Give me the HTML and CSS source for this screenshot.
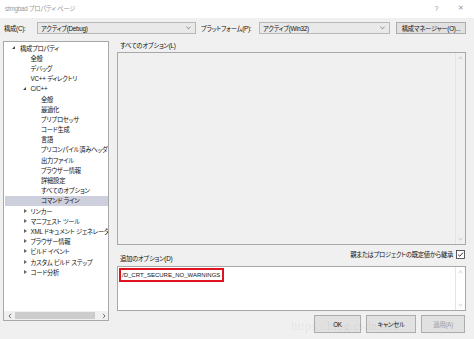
FILE: index.html
```html
<!DOCTYPE html>
<html lang="ja">
<head>
<meta charset="utf-8">
<link rel="stylesheet" href="styles.css">
</head>
<body>
<div class="window">
  <div class="titlebar">
    <span class="title">stmgbad プロパティ ページ</span>
    <span class="tb-btns"><span class="help">?</span><span class="close">✕</span></span>
  </div>
  <div class="toolbar">
    <span class="lbl lbl-config">構成(C):</span>
    <div class="combo combo-config"><span>アクティブ(Debug)</span><svg class="chev" viewBox="0 0 6 4"><path d="M0.5 0.5 L3 3 L5.5 0.5" fill="none" stroke="#555" stroke-width="0.8"/></svg></div>
    <span class="lbl lbl-platform">プラットフォーム(P):</span>
    <div class="combo combo-platform"><span>アクティブ(Win32)</span><svg class="chev" viewBox="0 0 6 4"><path d="M0.5 0.5 L3 3 L5.5 0.5" fill="none" stroke="#555" stroke-width="0.8"/></svg></div>
    <div class="btn btn-manager">構成マネージャー(O)...</div>
  </div>
  <div class="main">
    <div class="tree-panel">
      <div class="tree">
        <div class="row l0"><span class="arrow open"></span><span>構成プロパティ</span></div>
        <div class="row l1"><span class="arrow"></span><span>全般</span></div>
        <div class="row l1"><span class="arrow"></span><span>デバッグ</span></div>
        <div class="row l1"><span class="arrow"></span><span>VC++ ディレクトリ</span></div>
        <div class="row l1"><span class="arrow open"></span><span>C/C++</span></div>
        <div class="row l2"><span class="arrow"></span><span>全般</span></div>
        <div class="row l2"><span class="arrow"></span><span>最適化</span></div>
        <div class="row l2"><span class="arrow"></span><span>プリプロセッサ</span></div>
        <div class="row l2"><span class="arrow"></span><span>コード生成</span></div>
        <div class="row l2"><span class="arrow"></span><span>言語</span></div>
        <div class="row l2"><span class="arrow"></span><span>プリコンパイル済みヘッダー</span></div>
        <div class="row l2"><span class="arrow"></span><span>出力ファイル</span></div>
        <div class="row l2"><span class="arrow"></span><span>ブラウザー情報</span></div>
        <div class="row l2"><span class="arrow"></span><span>詳細設定</span></div>
        <div class="row l2"><span class="arrow"></span><span>すべてのオプション</span></div>
        <div class="row l2 selected"><span class="arrow"></span><span>コマンド ライン</span></div>
        <div class="row l1"><span class="arrow closed"></span><span>リンカー</span></div>
        <div class="row l1"><span class="arrow closed"></span><span>マニフェスト ツール</span></div>
        <div class="row l1"><span class="arrow closed"></span><span>XML ドキュメント ジェネレーター</span></div>
        <div class="row l1"><span class="arrow closed"></span><span>ブラウザー情報</span></div>
        <div class="row l1"><span class="arrow closed"></span><span>ビルド イベント</span></div>
        <div class="row l1"><span class="arrow closed"></span><span>カスタム ビルド ステップ</span></div>
        <div class="row l1"><span class="arrow closed"></span><span>コード分析</span></div>
      </div>
      <div class="hscroll">
        <svg class="sarrow" viewBox="0 0 4 6"><path d="M3 0.8 L1 3 L3 5.2" fill="none" stroke="#606060" stroke-width="0.9"/></svg>
        <div class="thumb"></div>
        <svg class="sarrow" viewBox="0 0 4 6"><path d="M1 0.8 L3 3 L1 5.2" fill="none" stroke="#606060" stroke-width="0.9"/></svg>
      </div>
    </div>
    <div class="right">
      <div class="label label-all">すべてのオプション(L)</div>
      <div class="box box-all">
        <div class="box-content"></div>
        <div class="vscroll">
          <svg class="varrow" viewBox="0 0 6 4"><path d="M0.8 3 L3 1 L5.2 3" fill="none" stroke="#a8a8a8" stroke-width="0.8"/></svg>
          <svg class="varrow" viewBox="0 0 6 4"><path d="M0.8 1 L3 3 L5.2 1" fill="none" stroke="#a8a8a8" stroke-width="0.8"/></svg>
        </div>
      </div>
      <div class="mid-row">
        <span class="label label-add">追加のオプション(D)</span>
        <span class="inherit"><span>親またはプロジェクトの既定値から継承</span><svg class="check" viewBox="0 0 9 9"><rect x="0.5" y="0.5" width="8" height="8" fill="#fff" stroke="#333" stroke-width="0.8"/><path d="M2 4.6 L3.8 6.3 L7 2.6" fill="none" stroke="#222" stroke-width="0.9"/></svg></span>
      </div>
      <div class="box box-add">
        <div class="box-content"><span class="marked">/D_CRT_SECURE_NO_WARNINGS</span></div>
        <div class="vscroll">
          <svg class="varrow" viewBox="0 0 6 4"><path d="M0.8 3 L3 1 L5.2 3" fill="none" stroke="#a8a8a8" stroke-width="0.8"/></svg>
          <svg class="varrow" viewBox="0 0 6 4"><path d="M0.8 1 L3 3 L5.2 1" fill="none" stroke="#a8a8a8" stroke-width="0.8"/></svg>
        </div>
      </div>
      <div class="footer">
        <div class="btn btn-ok">OK</div>
        <div class="btn btn-cancel">キャンセル</div>
        <div class="btn btn-apply">適用(A)</div>
      </div>
    </div>
  </div>
  <div class="watermark">https://blog.csdn.net/</div>
</div>
</body>
</html>
```

FILE: styles.css
```css
* { box-sizing: border-box; }
html, body { margin: 0; padding: 0; }
body {
  width: 474px;
  height: 339px;
  background: #f0f0f0;
  font-family: "Liberation Sans", "Noto Sans CJK JP", sans-serif;
  font-size: 6.3px;
  letter-spacing: -0.25px;
  font-feature-settings: "palt";
  color: #111;
  overflow: hidden;
}
.window {
  position: relative;
  width: 474px;
  height: 339px;
}
.titlebar {
  height: 18px;
  background: #ffffff;
  display: flex;
  align-items: center;
  justify-content: space-between;
  padding: 0 10px 2px 5px;
  color: #999;
}
.tb-btns { display: flex; gap: 20px; align-items: center; }
.help { font-size: 7px; }
.close { font-size: 7px; }

.toolbar {
  margin-top: 4px;
  height: 12px;
  display: flex;
  align-items: center;
  padding-left: 4px;
}
.lbl { white-space: nowrap; }
.lbl-config { width: 33px; }
.lbl-platform { width: 58px; margin-left: 5px; }
.combo {
  height: 12px;
  background: #e9e9e9;
  border: 1px solid #b8b8b8;
  display: flex;
  align-items: center;
  justify-content: space-between;
  padding: 0 4px 0 3px;
}
.combo-config { width: 159px; }
.combo-platform { width: 131px; }
.chev { width: 5px; height: 4px; }
.btn {
  background: #e1e1e1;
  border: 1px solid #adadad;
  display: flex;
  align-items: center;
  justify-content: center;
  white-space: nowrap;
}
.btn-manager { width: 70px; height: 12px; margin-left: 6px; }

.main {
  margin-top: 7px;
  display: flex;
  align-items: flex-start;
  padding-left: 3px;
}
.tree-panel {
  width: 106px;
  height: 280px;
  background: #fff;
  border: 1px solid #a8a8a8;
  display: flex;
  flex-direction: column;
  overflow: hidden;
}
.tree {
  flex: 1;
  padding: 1px 0 0 1px;
  overflow: hidden;
}
.row {
  height: 10.2px;
  display: flex;
  align-items: center;
  white-space: nowrap;
}
.row.l0 { padding-left: 7px; }
.row.l1 { padding-left: 17.5px; }
.row.l2 { padding-left: 28px; }
.row.selected { background: #cdcfdc; }
.arrow {
  width: 8px;
  flex: none;
  position: relative;
  height: 6px;
}
.arrow.open::before {
  content: "";
  position: absolute;
  left: 0;
  top: 1px;
  width: 0;
  height: 0;
  border-left: 3px solid transparent;
  border-bottom: 3px solid #444;
}
.arrow.closed::before {
  content: "";
  position: absolute;
  left: 1px;
  top: 0.5px;
  width: 0;
  height: 0;
  border-top: 2.5px solid transparent;
  border-bottom: 2.5px solid transparent;
  border-left: 3px solid #666;
}
.hscroll {
  height: 9px;
  background: #f0f0f0;
  display: flex;
  align-items: center;
  padding: 0 2px 0 4px;
  gap: 3px;
}
.sarrow { width: 4px; height: 6px; flex: none; }
.thumb {
  flex: 1;
  height: 7px;
  background: #cdcdcd;
  margin: 0 4px 0 0;
}

.right {
  margin-left: 8px;
  width: 349px;
  display: flex;
  flex-direction: column;
}
.label { white-space: nowrap; padding-left: 3px; }
.label-all { height: 11px; line-height: 10px; }
.box {
  border: 1px solid #a8a8a8;
  display: flex;
}
.box-content { flex: 1; position: relative; }
.box-all { height: 193px; background: #f0f0f0; }
.box-add { height: 45px; background: #fff; }
.vscroll {
  width: 10px;
  border-left: 1px solid #e4e4e4;
  display: flex;
  flex-direction: column;
  justify-content: space-between;
  align-items: center;
  padding: 3px 0 3px;
}
.varrow { width: 5px; height: 4px; }
.mid-row {
  height: 21px;
  display: flex;
  justify-content: space-between;
}
.label-add { align-self: flex-end; line-height: 8px; padding-bottom: 3px; }
.inherit {
  display: flex;
  align-items: center;
  gap: 3px;
  padding-top: 5px;
  height: 14px;
  padding-right: 1px;
}
.check { width: 9px; height: 9px; }
.marked {
  display: inline-block;
  margin: 1px 0 0 1px;
  border: 2px solid #e0141e;
  padding: 1px 2px 1px 1px;
  line-height: 8px;
  font-size: 6px;
  letter-spacing: 0;
  color: #111;
}
.footer {
  margin-top: 4px;
  display: flex;
  justify-content: flex-end;
  gap: 5px;
  padding-right: 1px;
}
.footer .btn { height: 18px; }
.btn-ok { width: 47px; }
.btn-cancel { width: 50px; }
.btn-apply { width: 44px; color: #a0a0a0; }
.watermark {
  position: absolute;
  left: 291px;
  top: 318px;
  font-family: "Liberation Serif", serif;
  font-size: 13px;
  letter-spacing: 0;
  color: rgba(0, 0, 0, 0.07);
  pointer-events: none;
  white-space: nowrap;
}
```
